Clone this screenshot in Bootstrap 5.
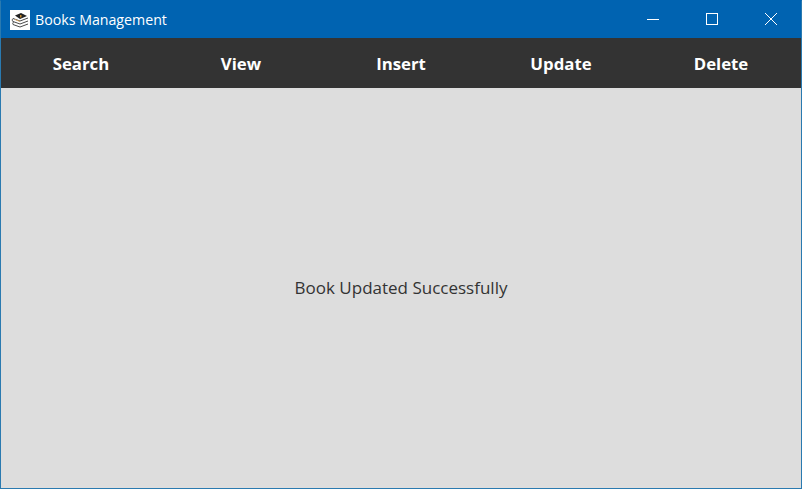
<!DOCTYPE html>
<html lang="en">
<head>
<meta charset="utf-8">
<title>Books Management</title>
<link rel="stylesheet" href="https://cdn.jsdelivr.net/npm/bootstrap@5.3.0/dist/css/bootstrap.min.css">
<style>
html,body{height:100%;margin:0;background:#fff;overflow:hidden}
.app-window{width:802px;height:489px;border:1px solid #2a7ab0;border-top-color:#0063b1;font-family:"Open Sans","Noto Sans",sans-serif}
.app-title{height:37px;background:#0063b1;color:#fff;font-size:14.2px;padding-left:9px;padding-right:1px}
.app-icon{width:20px;height:20px;margin-right:5px}
.win-btn{width:59px;height:37px;padding-bottom:2px}
.app-menu{height:50px;background:#333;color:#fff;font-size:16.8px;font-weight:700;padding-top:1px}
.menu-item{width:160px}
.app-body{background:#ddd;color:#333;font-size:17px;padding-bottom:1px}
</style>
</head>
<body>
<div class="app-window d-flex flex-column">
  <div class="app-title d-flex align-items-center flex-shrink-0">
    <svg class="app-icon" viewBox="0 0 20 20"><rect width="20" height="20" fill="#fff"/><path d="M5 5.500 11 3l6 3-7 3z" fill="#222"/><path d="M10 5h1.500v2.500H10z" fill="#c98a2b"/><path d="M3 8.500 10 11l8-3M3 11.500 10 14l8-3M3 14.500 10 17l8-3M3 8.500c-1 1-1 2 0 3s-1 2 0 3" fill="none" stroke="#4a4a4a"/><path d="M5 9.500 10 11.500" stroke="#d9a866"/></svg>
    <span class="flex-grow-1">Books Management</span>
    <div class="win-btn d-flex align-items-center justify-content-center"><svg width="12" height="12" viewBox="0 0 12 12"><path d="M0 6.500h12" stroke="#fff"/></svg></div>
    <div class="win-btn d-flex align-items-center justify-content-center"><svg width="12" height="12" viewBox="0 0 12 12"><rect x=".5" y=".5" width="11" height="11" fill="none" stroke="#fff"/></svg></div>
    <div class="win-btn d-flex align-items-center justify-content-center"><svg width="12" height="12" viewBox="0 0 12 12"><path d="M0 0l12 12M12 0 0 12" stroke="#fff" fill="none"/></svg></div>
  </div>
  <div class="app-menu d-flex align-items-center flex-shrink-0">
    <div class="menu-item text-center">Search</div>
    <div class="menu-item text-center">View</div>
    <div class="menu-item text-center">Insert</div>
    <div class="menu-item text-center">Update</div>
    <div class="menu-item text-center">Delete</div>
  </div>
  <div class="app-body flex-grow-1 d-flex align-items-center justify-content-center">Book Updated Successfully</div>
</div>
<script src="https://cdn.jsdelivr.net/npm/bootstrap@5.3.0/dist/js/bootstrap.bundle.min.js"></script>
</body>
</html>
